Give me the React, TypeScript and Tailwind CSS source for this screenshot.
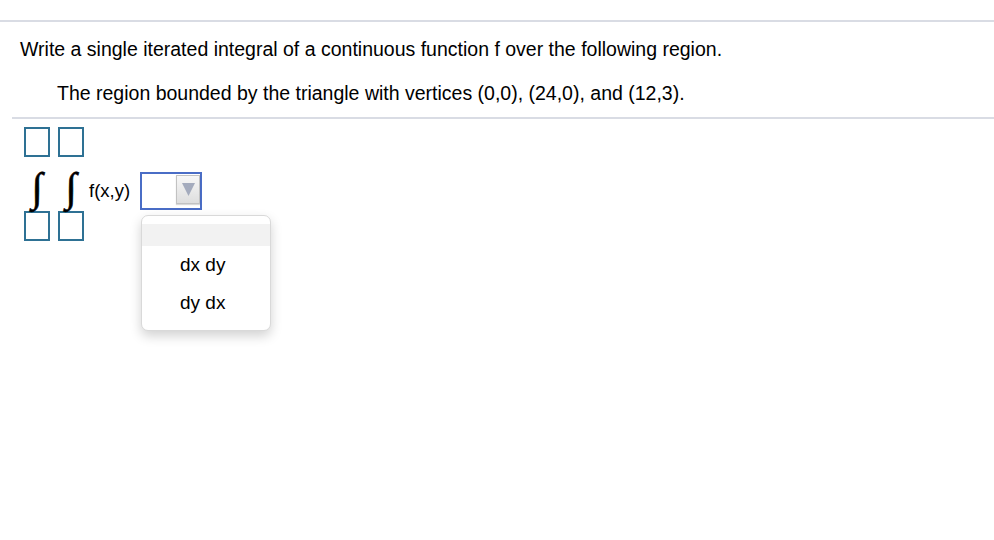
import React from "react";

function Box() {
  return <div className="h-[30px] w-[26px] border-2 border-[#2e7194] bg-white" />;
}

function IntegralColumn() {
  return (
    <div className="flex w-[26px] flex-col items-center">
      <Box />
      <div className="flex h-[54px] w-[26px] items-center justify-center">
        <span className="font-['Liberation_Serif','Times_New_Roman',serif] text-[41px] leading-[40px] text-black translate-y-[3px] [-webkit-text-stroke:0.6px_black]">
          ∫
        </span>
      </div>
      <Box />
    </div>
  );
}

export default function App() {
  return (
    <div className="relative h-[540px] w-[994px] overflow-hidden bg-white font-['Liberation_Sans',Arial,sans-serif] text-black">
      <div className="pt-[20px]">
        <div className="h-[2px] bg-[#d9dce4]" />
      </div>
      <p className="mt-[15px] pl-[20px] text-[19.5px] leading-[24px]">
        Write a single iterated integral of a continuous function f over the following region.
      </p>
      <p className="mt-[20px] pl-[57px] text-[19.5px] leading-[24px]">
        The region bounded by the triangle with vertices (0,0), (24,0), and (12,3).
      </p>
      <div className="ml-[12px] mt-[12px] h-[2px] bg-[#d9dce4]" />

      <div className="mt-[8px] flex items-start pl-[24px]">
        <IntegralColumn />
        <div className="ml-[8px]">
          <IntegralColumn />
        </div>
        <div className="ml-[5px] mt-[54px] text-[18.5px] leading-[20px]">f(x,y)</div>
        <div className="ml-[10px] mt-[45px] flex h-[38px] w-[62px] items-start justify-end border-2 border-[#4a6dc6] bg-white pt-[1px]">
          <div className="flex h-[29px] w-[24px] items-center justify-center border border-[#c2c2c2] bg-gradient-to-b from-[#f7f7f7] to-[#dedede] shadow-[0_1px_1px_rgba(0,0,0,0.15)]">
            <svg width="13" height="13" viewBox="0 0 13 13">
              <polygon points="0,0 13,0 6.5,13" fill="#a4abbd" />
            </svg>
          </div>
        </div>
      </div>

      <div className="absolute left-[141px] top-[215px] w-[130px] rounded-[7px] border border-[#d9d9d9] bg-white py-[8px] shadow-[0_5px_12px_rgba(0,0,0,0.18)]">
        <div className="h-[22px] bg-[#f2f2f2]" />
        <div className="flex h-[38px] items-center pl-[38px] text-[19px] leading-[22px]">dx dy</div>
        <div className="flex h-[38px] items-center pl-[38px] text-[19px] leading-[22px]">dy dx</div>
      </div>
    </div>
  );
}
